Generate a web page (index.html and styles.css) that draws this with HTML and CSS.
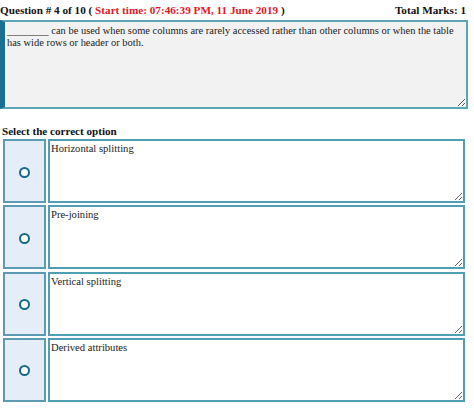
FILE: index.html
```html
<!DOCTYPE html>
<html>
<head>
<meta charset="utf-8">
<link rel="stylesheet" href="styles.css">
</head>
<body>
<div class="header">
  <div class="qtitle">Question # 4 of 10 ( <span class="red">Start time: 07:46:39 PM, 11 June 2019</span> )</div>
  <div class="marks">Total Marks: 1</div>
</div>
<textarea class="question" readonly>________ can be used when some columns are rarely accessed rather than other columns or when the table has wide rows or header or both.</textarea>
<div class="select">Select the correct option</div>
<div class="options">
  <div class="opt">
    <div class="radiocell"><span class="radio"></span></div>
    <textarea class="answer" readonly>Horizontal splitting</textarea>
  </div>
  <div class="opt">
    <div class="radiocell"><span class="radio"></span></div>
    <textarea class="answer" readonly>Pre-joining</textarea>
  </div>
  <div class="opt">
    <div class="radiocell"><span class="radio"></span></div>
    <textarea class="answer" readonly>Vertical splitting</textarea>
  </div>
  <div class="opt">
    <div class="radiocell"><span class="radio"></span></div>
    <textarea class="answer" readonly>Derived attributes</textarea>
  </div>
</div>
</body>
</html>
```
FILE: styles.css
```css
html, body {
  margin: 0;
  padding: 0;
  background: #ffffff;
  font-family: "Liberation Serif", "Times New Roman", serif;
  color: #111;
}
.header {
  display: flex;
  justify-content: space-between;
  align-items: center;
  height: 20px;
  padding: 0 8px 0 0;
  font-weight: bold;
  font-size: 11.2px;
}
.red { color: #e8161f; }
.question {
  display: block;
  box-sizing: border-box;
  width: 468px;
  height: 89px;
  margin: 0;
  padding: 3px 2px;
  border: 2px solid #5aa6b6;
  border-left: 5px solid #1a7090;
  background: #f2f2f2;
  font-family: "Liberation Serif", "Times New Roman", serif;
  font-size: 10.45px;
  line-height: 12px;
  color: #222;
  outline: none;
}
.select {
  font-weight: bold;
  font-size: 11.1px;
  margin: 15px 0 0 2px;
  height: 15px;
  line-height: 15px;
}
.options {
  display: flex;
  flex-direction: column;
  gap: 2.3px;
  margin: 0 0 0 3px;
  width: 462px;
}
.opt {
  display: flex;
  gap: 2px;
  height: 64px;
}
.radiocell {
  box-sizing: border-box;
  width: 43px;
  height: 100%;
  background: #e5edf8;
  border: 2px solid #5d9ab3;
  display: flex;
  align-items: center;
  justify-content: center;
  padding-top: 2px;
}
.radio {
  box-sizing: border-box;
  width: 11px;
  height: 11px;
  border: 2.5px solid #176a86;
  border-radius: 50%;
  background: #fff;
}
.answer {
  flex: 1;
  box-sizing: border-box;
  height: 100%;
  margin: 0;
  padding: 2px 1px;
  border: 2px solid #4f9fb4;
  background: #fff;
  font-family: "Liberation Serif", "Times New Roman", serif;
  font-size: 10.6px;
  line-height: 12px;
  color: #222;
  outline: none;
}
```
